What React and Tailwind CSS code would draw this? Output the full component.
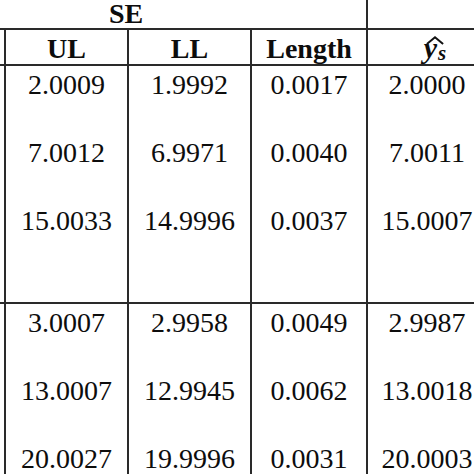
const LINE = "border-[#2a2a2a]";

const groups = [
  {
    ul: ["2.0009", "7.0012", "15.0033"],
    ll: ["1.9992", "6.9971", "14.9996"],
    len: ["0.0017", "0.0040", "0.0037"],
    ys: ["2.0000", "7.0011", "15.0007"],
  },
  {
    ul: ["3.0007", "13.0007", "20.0027"],
    ll: ["2.9958", "12.9945", "19.9996"],
    len: ["0.0049", "0.0062", "0.0031"],
    ys: ["2.9987", "13.0018", "20.0003"],
  },
];

// column widths incl. right border; first column is cropped off the left edge
const COLS = ["w-[124px]", "w-[123px]", "w-[123px]", "w-[116px]", "w-[123px]"];

function Cell({ w, children, className = "" }) {
  return (
    <div className={`${w} shrink-0 h-full border-r-2 ${LINE} flex flex-col items-center ${className}`}>
      {children}
    </div>
  );
}

function Values({ list }) {
  return (
    <div className="flex flex-col items-center gap-[40px] pt-[5px]">
      {list.map((v) => (
        <span key={v}>{v}</span>
      ))}
    </div>
  );
}

function YHat() {
  return (
    <span className="inline-flex items-start font-bold italic ml-[16px] text-[30px]">
      <span className="relative inline-block">
        y
        <svg className="absolute left-[2px] top-[2px]" width="18" height="9" viewBox="0 0 18 9">
          <polyline points="0.9,8 9,1.3 17.1,8" fill="none" stroke="#111" strokeWidth="2" />
        </svg>
      </span>
      <span className="relative top-[5px] text-[21px] ml-[1px]">s</span>
    </span>
  );
}

export default function App() {
  return (
    <div className="w-[474px] h-[474px] overflow-hidden bg-white">
      <div className="ml-[-118px] w-[800px] text-[#0d0d0d] text-[28px] leading-[28px] font-['Liberation_Serif','Times_New_Roman',serif]">
        {/* group header */}
        <div className={`flex h-[30px] border-b-2 ${LINE}`}>
          <div className={`w-[486px] shrink-0 h-full border-r-2 ${LINE} flex justify-center pl-[4px] font-bold`}>
            SE
          </div>
          <div className="flex-1" />
        </div>

        {/* column header */}
        <div className={`flex h-[36px] border-b-2 ${LINE} font-bold`}>
          <Cell w={COLS[0]} />
          <Cell w={COLS[1]} className="pt-[5px]">UL</Cell>
          <Cell w={COLS[2]} className="pt-[5px]">LL</Cell>
          <Cell w={COLS[3]} className="pt-[5px]">Length</Cell>
          <Cell w={COLS[4]} className="pt-[4px] pr-[3px]">
            <YHat />
          </Cell>
          <div className="flex-1" />
        </div>

        {groups.map((g, i) => (
          <div key={i} className={`flex h-[238px] border-b-2 ${LINE}`}>
            <Cell w={COLS[0]} />
            <Cell w={COLS[1]}><Values list={g.ul} /></Cell>
            <Cell w={COLS[2]}><Values list={g.ll} /></Cell>
            <Cell w={COLS[3]}><Values list={g.len} /></Cell>
            <Cell w={COLS[4]} className="pr-[3px]"><Values list={g.ys} /></Cell>
            <div className="flex-1" />
          </div>
        ))}
      </div>
    </div>
  );
}
